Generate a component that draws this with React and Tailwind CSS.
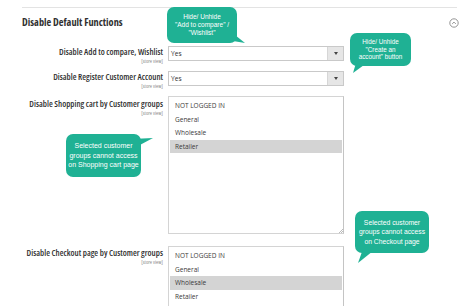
import React from 'react';

const teal = '#1fb194';

function Callout({ box, tail, lines, text }) {
  return (
    <div className={`absolute ${box}`}>
      <svg className="absolute left-0 top-0 overflow-visible" width="1" height="1">
        <polygon points={tail} fill={teal} />
      </svg>
      <div
        className={`relative flex h-full w-full flex-col items-center justify-center rounded-[7px] bg-[#1fb194] text-center text-white ${text}`}
        style={{ fontFamily: '"Liberation Sans", Arial, sans-serif' }}
      >
        {lines.map((l) => (
          <span key={l}>{l}</span>
        ))}
      </div>
    </div>
  );
}

function Label({ children, top }) {
  return (
    <div className={`flex h-[15px] w-[163px] shrink-0 flex-col items-end ${top}`}>
      <span className="whitespace-nowrap text-[8.7px] font-stretch-condensed font-semibold leading-[11px] text-[#303030]">
        {children}
      </span>
      <span className="whitespace-nowrap text-[5.3px] font-stretch-condensed leading-[6px] text-[#8a8a8a]">[store view]</span>
    </div>
  );
}

function Select({ value }) {
  return (
    <div className="flex h-[15px] w-[176px] border border-[#c9c9c9] bg-white">
      <span className="flex-1 pl-[2px] text-[6.6px] leading-[13px] text-[#303030]">{value}</span>
      <span className="flex w-[16px] items-center justify-center border-l border-[#d6d6d6] bg-[#e6e6e6]">
        <svg width="4" height="3" viewBox="0 0 4 3">
          <polygon points="0,0 4,0 2,3" fill="#444" />
        </svg>
      </span>
    </div>
  );
}

function MultiSelect({ selected, height, resize }) {
  const opts = ['NOT LOGGED IN', 'General', 'Wholesale', 'Retailer'];
  return (
    <div className={`relative w-[176px] shrink-0 border border-[#d4d4d4] border-r-[#c4c4c4] bg-white px-px pt-[2px] ${height}`}>
      {opts.map((o) => (
        <div
          key={o}
          className={`h-[13.5px] pl-[5px] text-[6.5px] leading-[13.5px] text-[#3a3a3a] ${o === selected ? 'bg-[#d4d4d4]' : ''}`}
        >
          {o}
        </div>
      ))}
      {resize && (
        <svg className="absolute bottom-0 right-0" width="5" height="5" viewBox="0 0 5 5">
          <line x1="1" y1="5" x2="5" y2="1" stroke="#aaa" strokeWidth="0.8" />
          <line x1="3" y1="5" x2="5" y2="3" stroke="#aaa" strokeWidth="0.8" />
        </svg>
      )}
    </div>
  );
}

export default function App() {
  return (
    <div
      className="relative h-[306px] w-[474px] overflow-hidden bg-white"
      style={{ fontFamily: '"Open Sans", "Liberation Sans", sans-serif' }}
    >
      <div className="ml-[22px] mt-[7px] w-[435px] border-t border-[#e3e3e3]" />

      {/* Section header */}
      <div className="flex h-[28px] items-center justify-between pl-[22px] pr-[15px] pt-[2px]">
        <h2 className="text-[10.3px] font-stretch-condensed font-bold text-[#303030]">Disable Default Functions</h2>
        <svg width="10" height="10" viewBox="0 0 10 10">
          <circle cx="5" cy="5" r="4.2" fill="none" stroke="#7a7a7a" strokeWidth="0.8" />
          <polyline points="3.2,5.9 5,4.1 6.8,5.9" fill="none" stroke="#7a7a7a" strokeWidth="0.8" />
        </svg>
      </div>

      <div className="mt-[10px] flex flex-col">
        <div className="flex gap-[5px]">
          <Label top="pt-px">Disable Add to compare, Wishlist</Label>
          <Select value="Yes" />
        </div>
        <div className="mt-[10px] flex gap-[5px]">
          <Label top="pt-px">Disable Register Customer Account</Label>
          <Select value="Yes" />
        </div>
        <div className="mt-[10px] flex gap-[5px]">
          <Label top="pt-[3px]">Disable Shopping cart by Customer groups</Label>
          <MultiSelect selected="Retailer" height="h-[138px]" resize />
        </div>
        <div className="mt-[12px] flex gap-[5px]">
          <Label top="pt-[2px]">Disable Checkout page by Customer groups</Label>
          <MultiSelect selected="Wholesale" height="h-[70px]" />
        </div>
      </div>

      <Callout
        box="left-[167px] top-[7px] h-[36px] w-[70px]"
        tail="60,33 68,28 78,36"
        text="text-[6.5px] leading-[8px]"
        lines={['Hide/ Unhide', '"Add to compare" /', '"Wishlist"']}
      />
      <Callout
        box="left-[350px] top-[33px] h-[33px] w-[61px]"
        tail="6,30 14,32 3,40"
        text="text-[6.3px] leading-[7.5px]"
        lines={['Hide/ Unhide', '"Create an', 'account" button']}
      />
      <Callout
        box="left-[66px] top-[134px] h-[43px] w-[75px]"
        tail="66,5 72,12 87,4"
        text="text-[7px] leading-[9.5px]"
        lines={['Selected customer', 'groups cannot access', 'on Shopping cart page']}
      />
      <Callout
        box="left-[355px] top-[211px] h-[42px] w-[74px]"
        tail="8,38 18,40 3,52"
        text="text-[6.8px] leading-[9.5px]"
        lines={['Selected customer', 'groups cannot access', 'on Checkout page']}
      />
    </div>
  );
}
